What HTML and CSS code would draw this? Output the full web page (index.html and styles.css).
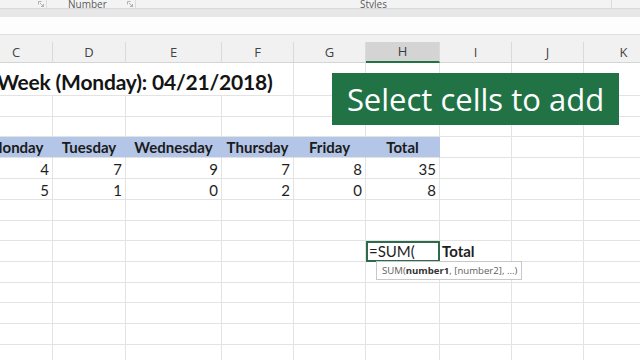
FILE: index.html
```html
<!DOCTYPE html>
<html>
<head>
<meta charset="utf-8">
<link rel="stylesheet" href="styles.css">
</head>
<body>
<div class="app">
  <div class="ribbon">
    <div class="rgroup g-align"><svg class="launch" viewBox="0 0 6 6"><path d="M0.5 0.5h3M0.5 0.5v3M2 2l3.5 3.5M5.5 3v2.5H3" /></svg></div>
    <div class="rgroup g-number"><span class="rlabel">Number</span><svg class="launch" viewBox="0 0 6 6"><path d="M0.5 0.5h3M0.5 0.5v3M2 2l3.5 3.5M5.5 3v2.5H3" /></svg></div>
    <div class="rgroup g-styles"><span class="rlabel">Styles</span></div>
    <div class="rgroup g-rest"></div>
  </div>
  <div class="band"></div>
  <div class="formula"></div>
  <div class="colheads">
    <div class="ch">C</div>
    <div class="ch">D</div>
    <div class="ch">E</div>
    <div class="ch">F</div>
    <div class="ch">G</div>
    <div class="ch sel">H</div>
    <div class="ch">I</div>
    <div class="ch">J</div>
    <div class="ch">K</div>
  </div>
  <div class="sheet">
    <!-- row 1 -->
    <div class="c title">Week (Monday): 04/21/2018)</div>
    <div class="c"></div><div class="c"></div><div class="c"></div><div class="c"></div><div class="c"></div>
    <!-- row 2 -->
    <div class="c"></div><div class="c"></div><div class="c"></div><div class="c"></div><div class="c"></div><div class="c"></div><div class="c"></div><div class="c"></div><div class="c"></div>
    <!-- row 3 -->
    <div class="c"></div><div class="c"></div><div class="c"></div><div class="c"></div><div class="c"></div><div class="c"></div><div class="c"></div><div class="c"></div><div class="c"></div>
    <!-- row 4 -->
    <div class="c hd">Monday</div><div class="c hd">Tuesday</div><div class="c hd">Wednesday</div><div class="c hd">Thursday</div><div class="c hd">Friday</div><div class="c hd">Total</div><div class="c"></div><div class="c"></div><div class="c"></div>
    <!-- row 5 -->
    <div class="c num">4</div><div class="c num">7</div><div class="c num">9</div><div class="c num">7</div><div class="c num">8</div><div class="c num">35</div><div class="c"></div><div class="c"></div><div class="c"></div>
    <!-- row 6 -->
    <div class="c num">5</div><div class="c num">1</div><div class="c num">0</div><div class="c num">2</div><div class="c num">0</div><div class="c num">8</div><div class="c"></div><div class="c"></div><div class="c"></div>
    <!-- row 7 -->
    <div class="c"></div><div class="c"></div><div class="c"></div><div class="c"></div><div class="c"></div><div class="c"></div><div class="c"></div><div class="c"></div><div class="c"></div>
    <!-- row 8 -->
    <div class="c"></div><div class="c"></div><div class="c"></div><div class="c"></div><div class="c"></div><div class="c"></div><div class="c"></div><div class="c"></div><div class="c"></div>
    <!-- row 9 -->
    <div class="c"></div><div class="c"></div><div class="c"></div><div class="c"></div><div class="c"></div>
    <div class="c active">=SUM(<div class="tip">SUM(<b>number1</b>, [number2], ...)</div></div>
    <div class="c bold">Total</div><div class="c"></div><div class="c"></div>
    <!-- row 10 -->
    <div class="c"></div><div class="c"></div><div class="c"></div><div class="c"></div><div class="c"></div><div class="c"></div><div class="c"></div><div class="c"></div><div class="c"></div>
    <!-- row 11 -->
    <div class="c"></div><div class="c"></div><div class="c"></div><div class="c"></div><div class="c"></div><div class="c"></div><div class="c"></div><div class="c"></div><div class="c"></div>
    <!-- row 12 -->
    <div class="c"></div><div class="c"></div><div class="c"></div><div class="c"></div><div class="c"></div><div class="c"></div><div class="c"></div><div class="c"></div><div class="c"></div>
    <!-- row 13 -->
    <div class="c"></div><div class="c"></div><div class="c"></div><div class="c"></div><div class="c"></div><div class="c"></div><div class="c"></div><div class="c"></div><div class="c"></div>
    <!-- row 14 -->
    <div class="c"></div><div class="c"></div><div class="c"></div><div class="c"></div><div class="c"></div><div class="c"></div><div class="c"></div><div class="c"></div><div class="c"></div>

    <div class="callout">Select cells to add</div>
  </div>
</div>
</body>
</html>
```
FILE: styles.css
```css
html, body {
  margin: 0;
  padding: 0;
}
body {
  width: 640px;
  height: 360px;
  overflow: hidden;
  background: #ffffff;
  font-family: Lato, "Liberation Sans", sans-serif;
}
.app {
  width: 640px;
  height: 360px;
  overflow: hidden;
}

/* ribbon strip */
.ribbon {
  display: flex;
  height: 8px;
  background: #f3f3f3;
  border-bottom: 1px solid #d9d9d9;
  overflow: hidden;
}
.rgroup {
  display: flex;
  align-items: flex-end;
  height: 8px;
  border-right: 1px solid #dcdcdc;
  box-sizing: border-box;
}
.g-align {
  width: 47px;
  justify-content: flex-end;
  padding-right: 2px;
}
.g-number {
  width: 89px;
  justify-content: space-between;
  padding-left: 21px;
  padding-right: 2px;
}
.g-styles {
  width: 476px;
  justify-content: center;
}
.g-rest {
  flex: 1;
  border-right: 0;
}
.rlabel {
  font-family: "Open Sans", sans-serif;
  font-size: 10px;
  line-height: 10px;
  color: #5a5a5a;
  margin-bottom: -1px;
}
.launch {
  width: 6px;
  height: 6px;
  margin-bottom: 1px;
  fill: none;
  stroke: #a0a0a0;
  stroke-width: 0.8;
}

.band {
  height: 8px;
  background: #e7e7e7;
}
.formula {
  height: 17px;
  background: #fdfdfd;
  border-bottom: 1px solid #dedede;
}

/* column headers */
.colheads {
  display: grid;
  grid-template-columns: 73px 73px 96px 72px 72px 74px 72px 72px 80px;
  margin-left: -20px;
  height: 28px;
  box-sizing: border-box;
  padding-top: 7px;
  background: #f1f1f1;
  border-bottom: 1px solid #d4d4d4;
}
.ch {
  font-family: "Open Sans", sans-serif;
  font-size: 13px;
  line-height: 21px;
  color: #444;
  text-align: center;
  border-right: 1px solid #dadada;
}
.ch.sel {
  background: #d4d4d4;
  border-bottom: 2px solid #217346;
  line-height: 19px;
  color: #3a3a3a;
}

/* sheet grid */
.sheet {
  position: relative;
  display: grid;
  grid-template-columns: 73px 73px 96px 72px 72px 74px 72px 72px 80px;
  grid-template-rows: 33px 21px 20px 21px 21px 21px 21px 20px 21px 21px 20px 21px 21px 21px;
  margin-left: -20px;
}
.c {
  position: relative;
  box-sizing: border-box;
  border-right: 1px solid #e3e3e3;
  border-bottom: 1px solid #e3e3e3;
  display: flex;
  align-items: flex-end;
  padding: 0 3px 0 3px;
  font-size: 15px;
  line-height: 19px;
  color: #1e1e1e;
  white-space: nowrap;
}
.num {
  justify-content: flex-end;
  line-height: 17px;
}
.title {
  grid-column: span 4;
  font-size: 21px;
  font-weight: 700;
  line-height: 26px;
  padding-left: 17px;
  letter-spacing: -0.2px;
  color: #141414;
}
.hd {
  background: #b4c6e7;
  border-right-color: transparent;
  justify-content: center;
  font-weight: 700;
  color: #1b1b1b;
}
.bold {
  font-weight: 700;
  padding-left: 2px;
}
.active {
  border: 2px solid #2e6b4a;
  padding-left: 1px;
  line-height: 18px;
}
.tip {
  position: absolute;
  left: 8px;
  top: 100%;
  margin-top: 1px;
  background: #ffffff;
  border: 1px solid #c8c8c8;
  padding: 0 4px 0 5px;
  font-family: "Open Sans", sans-serif;
  font-size: 9.6px;
  line-height: 17px;
  color: #606060;
  white-space: nowrap;
  z-index: 2;
}
.tip b {
  color: #333;
}
.callout {
  position: absolute;
  left: 352px;
  top: 10px;
  width: 287px;
  height: 52px;
  background: #217346;
  color: #ffffff;
  font-family: "Open Sans", sans-serif;
  font-size: 31px;
  line-height: 52px;
  text-align: center;
  z-index: 3;
}
```
